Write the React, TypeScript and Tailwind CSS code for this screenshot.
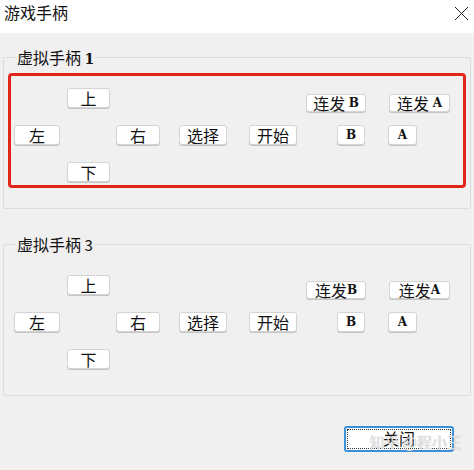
import type { ReactNode } from "react";

const cjk = "font-['Microsoft_YaHei','Noto_Sans_CJK_SC',sans-serif]";

function Btn({
  children,
  w,
  h = "h-[20px]",
  className = ""
}: {
  children: ReactNode;
  w: string;
  h?: string;
  className?: string;
}) {
  return (
    <div
      className={`${w} ${h} ${className} flex items-center justify-center whitespace-pre rounded-[3px] border border-[#d4d4d4] bg-white text-[16px] leading-none text-[#111] shadow-[0_1px_0_#c4c4c4]`}
    >
      {children}
    </div>
  );
}

function Letter({ children }: { children: ReactNode }) {
  return (
    <span className="font-['DejaVu_Serif',serif] text-[12px] font-bold">
      {children}
    </span>
  );
}

function Pad({ spaced }: { spaced: boolean }) {
  return (
    <div className="flex h-[109px] items-start">
      <div className="ml-[3px] pt-[49px]">
        <Btn w="w-[46px]">左</Btn>
      </div>
      <div className="ml-[7px] flex flex-col pt-[12px]">
        <Btn w="w-[43px]">上</Btn>
        <Btn w="w-[43px]" className="mt-[54px]">
          下
        </Btn>
      </div>
      <div className="ml-[6px] pt-[49px]">
        <Btn w="w-[44px]">右</Btn>
      </div>
      <div className="ml-[19px] pt-[49px]">
        <Btn w="w-[48px]">选择</Btn>
      </div>
      <div className="ml-[22px] pt-[49px]">
        <Btn w="w-[48px]">开始</Btn>
      </div>
      <div className="ml-[9px] flex w-[60px] flex-col items-end pt-[18px]">
        <Btn w="w-[60px]" h="h-[18px]">
          <span>{spaced ? "连发\u00a0" : "连发"}</span>
          <Letter>B</Letter>
        </Btn>
        <Btn w="w-[28px]" className="mr-[1px] mt-[13px]">
          <Letter>B</Letter>
        </Btn>
      </div>
      <div className="ml-[23px] flex w-[61px] flex-col items-start pt-[18px]">
        <Btn w="w-[61px]" h="h-[18px]">
          <span>{spaced ? "连发\u00a0" : "连发"}</span>
          <Letter>A</Letter>
        </Btn>
        <Btn w="w-[29px]" className="-ml-[1px] mt-[13px]">
          <Letter>A</Letter>
        </Btn>
      </div>
    </div>
  );
}

function Group({
  label,
  digit,
  highlight
}: {
  label: string;
  digit: ReactNode;
  highlight: boolean;
}) {
  return (
    <fieldset className="mx-[3px] rounded-[2px] border border-[#dcdcdc] px-[4px] pb-[20px]">
      <legend className="ml-[8px] h-[20px] px-[1px] text-[16px] leading-[20px] text-[#111]">
        {label} {digit}
      </legend>
      <div
        className={`mt-[6px] rounded-[4px] border-[3px] ${
          highlight ? "border-[#e1251b]" : "border-transparent"
        }`}
      >
        <Pad spaced={highlight} />
      </div>
    </fieldset>
  );
}

export default function App() {
  return (
    <div className={`${cjk} flex h-[470px] w-[474px] flex-col overflow-hidden bg-[#f0f0f0]`}>
      <div className="flex h-[33px] shrink-0 items-start justify-between bg-white pl-[4px] pr-[5px] pt-[2px]">
        <span className="text-[16px] leading-[20px] text-[#111]">游戏手柄</span>
        <svg width="15" height="15" viewBox="0 0 15 15" className="mt-[4px]">
          <path d="M1 1 L14 14 M14 1 L1 14" stroke="#222" strokeWidth="1" fill="none" />
        </svg>
      </div>
      <div className="mt-[14px]">
        <Group
          label="虚拟手柄"
          digit={<span className="font-['DejaVu_Serif',serif] text-[14px] font-bold">1</span>}
          highlight
        />
      </div>
      <div className="mt-[25px]">
        <Group label="虚拟手柄" digit={<span className="text-[15px]">3</span>} highlight={false} />
      </div>
      <div className="relative mt-[30px] flex justify-end pr-[20px]">
        <div className="flex h-[26px] w-[110px] items-center justify-center rounded-[3px] border-2 border-[#3c8fd9] bg-white p-[1px]">
          <div className="flex h-full w-full items-center justify-center border border-dotted border-[#333] pb-[2px] text-[16px] leading-none text-[#111]">
            关闭
          </div>
        </div>
        <span className="pointer-events-none absolute right-[12px] top-[7px] text-[15px] leading-[18px] text-white/70 [text-shadow:0_0_1px_#9a9a9a]">
          知乎 @程小王
        </span>
      </div>
    </div>
  );
}
